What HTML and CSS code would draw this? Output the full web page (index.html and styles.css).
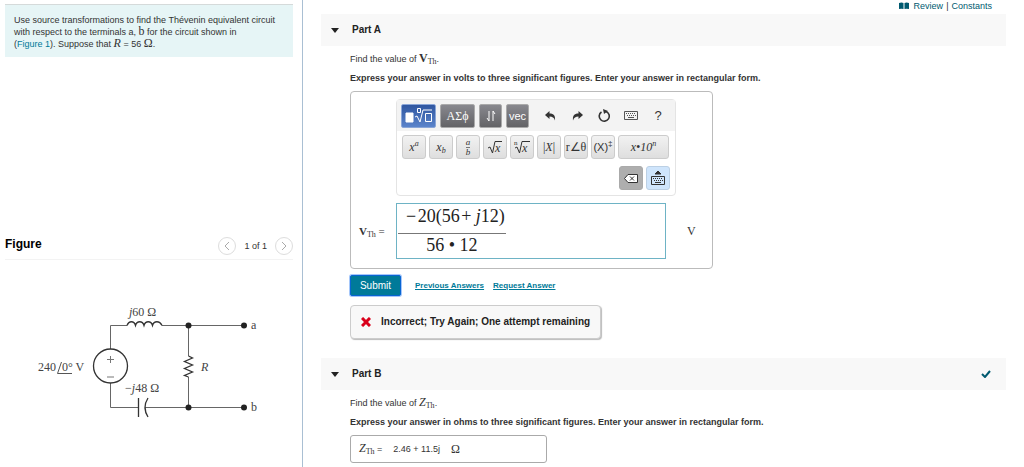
FILE: index.html
```html
<!DOCTYPE html>
<html lang="en">
<head>
    <meta charset="UTF-8">
    <meta name="viewport" content="width=device-width, initial-scale=1.0">
    <title>Thévenin Equivalent</title>
    <link rel="stylesheet" href="styles.css">
</head>
<body>
    <div class="page">
        <aside class="sidebar">
            <div class="problem">
                Use source transformations to find the Thévenin equivalent circuit<br>
                with respect to the terminals a, <span class="math">b</span> for the circuit shown in<br>
                (<a href="#figure">Figure 1</a>). Suppose that <i class="math">R</i> = 56 <span class="math">Ω</span>.
            </div>

            <section class="figure" id="figure">
                <div class="figure-head">
                    <h2>Figure</h2>
                    <div class="pager">
                        <button class="pager-btn" aria-label="Previous figure">
                            <svg width="6" height="10" viewBox="0 0 6 10"><path d="M5 1L1 5l4 4"/></svg>
                        </button>
                        <span>1 of 1</span>
                        <button class="pager-btn" aria-label="Next figure">
                            <svg width="6" height="10" viewBox="0 0 6 10"><path d="M1 1l4 4-4 4"/></svg>
                        </button>
                    </div>
                </div>
                <svg class="circuit" width="260" height="135" viewBox="0 0 260 135" role="img" aria-label="Circuit diagram">
                    <!-- wires -->
                    <g class="wire">
                        <path d="M90.500 55V31.500H107M142 31.500H224"/>
                        <path d="M90.500 89V113.500H118M125 113.500H224"/>
                        <path d="M168.500 31V62M168.500 83V113"/>
                    </g>
                    <!-- source, inductor, capacitor, resistor -->
                    <g class="part-line">
                        <circle cx="90.500" cy="72" r="17"/>
                        <path d="M107 31.500c2-5 7-5 8.500 0c1.500-5 7-5 8.500 0c1.500-5 7-5 8.500 0c1.500-5 7-5 9.500 0"/>
                        <path d="M118.500 104v19M128 104q-6 9.500 0 19"/>
                        <path d="M168.500 62l4 2-8 3.500 8 3.500-8 3.500 8 3.500-8 3.500 4 1.500"/>
                    </g>
                    <path class="sign" d="M87 65.500h7M90.500 62v7M87 83h7"/>
                    <g class="dot">
                        <circle cx="168.500" cy="31.500" r="3"/>
                        <circle cx="224" cy="31.500" r="3"/>
                        <circle cx="168.500" cy="113.500" r="3"/>
                        <circle cx="224" cy="113.500" r="3"/>
                    </g>
                    <g class="label">
                        <text x="109" y="22"><tspan class="it">j</tspan>60 Ω</text>
                        <text x="105" y="98">−<tspan class="it">j</tspan>48 Ω</text>
                        <text x="18" y="77">240</text>
                        <text x="42" y="77">0° V</text>
                        <text class="it" x="181" y="77">R</text>
                        <text x="231" y="35">a</text>
                        <text x="231" y="117">b</text>
                        <path d="M41.500 68L37.500 79.500H52"/>
                    </g>
                </svg>
            </section>
        </aside>

        <main class="content">
            <nav class="links">
                <svg width="10" height="8" viewBox="0 0 10 8"><path d="M0 1q2.500-1 4.500 0v6q-2-.6-4.500 0zM5.500 1q2-1 4.500 0v6q-2.500-.6-4.500 0z"/></svg>
                <a href="#review">Review</a> <span>|</span> <a href="#constants">Constants</a>
            </nav>

            <section class="part">
                <button class="part-head" aria-expanded="true">
                    <span class="caret"></span>
                    <span>Part A</span>
                </button>
                <div class="part-body">
                    <p>Find the value of <b class="math">V</b><sub>Th</sub>.</p>
                    <p class="instruction">Express your answer in volts to three significant figures. Enter your answer in rectangular form.</p>

                    <div class="answer">
                        <div class="toolbar" role="toolbar" aria-label="Equation editor">
                            <div class="tabs">
                                <button class="tab wide active" aria-label="Templates">
                                    <svg width="28" height="18" viewBox="0 0 28 18"><path class="fill" d="M1 6h7v9H1z"/><path d="M12.500 1.500h3v4h-3zM10 10l2-1 3 6 3-12h9M20.500 6.500h6v8h-6z"/></svg>
                                </button>
                                <button class="tab wide greek">ΑΣϕ</button>
                                <button class="tab" aria-label="Arrows">
                                    <svg width="10" height="12" viewBox="0 0 10 12"><path d="M3 1v10M1 8l2 3M7 11V1M7 1l2 3"/></svg>
                                </button>
                                <button class="tab">vec</button>
                                <div class="tools">
                                    <button class="tool" aria-label="Undo">
                                        <svg width="11" height="10" viewBox="0 0 11 10"><path class="solid" d="M0 4l4.500-4v2.500C9 2.500 10.500 5 10 9.500 9 6.500 7.500 5.500 4.500 5.500V8z"/></svg>
                                    </button>
                                    <button class="tool" aria-label="Redo">
                                        <svg width="11" height="10" viewBox="0 0 11 10"><path class="solid" d="M11 4L6.500 0v2.500C2 2.500.5 5 1 9.500 2 6.500 3.500 5.500 6.500 5.500V8z"/></svg>
                                    </button>
                                    <button class="tool" aria-label="Reset">
                                        <svg width="12" height="13" viewBox="0 0 12 13"><path class="ring" d="M3.500 3A5 5 0 1 0 8 2.500"/><path class="solid" d="M5 0l5 2-4 3z"/></svg>
                                    </button>
                                    <button class="tool" aria-label="Keyboard shortcuts">
                                        <svg width="14" height="9" viewBox="0 0 14 9"><path class="keys" d="M.5.5h13v8H.500z"/><path class="keys dots" d="M2 2.500h10M3 4.500h9"/><path class="keys" d="M4 6.500h6"/></svg>
                                    </button>
                                    <button class="tool help" aria-label="Help">?</button>
                                </div>
                            </div>
                            <div class="keypad">
                                <button class="key"><i>x<sup>a</sup></i></button>
                                <button class="key"><i>x<sub>b</sub></i></button>
                                <button class="key"><i class="small-frac"><span>a</span><span>b</span></i></button>
                                <button class="key" aria-label="Square root">
                                    <svg width="16" height="14" viewBox="0 0 16 14"><path d="M1 8l2-1 2.500 6L8 1.500h7"/><text x="8" y="12">x</text></svg>
                                </button>
                                <button class="key" aria-label="Nth root">
                                    <svg width="18" height="16" viewBox="0 0 18 16"><path d="M2 9l2-1 2.500 6L9 2.500h8"/><text class="index" x="1" y="6">n</text><text x="9" y="13">x</text></svg>
                                </button>
                                <button class="key"><span>|<i>X</i>|</span></button>
                                <button class="key">r∠θ</button>
                                <button class="key sans">(X)<sup>‡</sup></button>
                                <button class="key sci"><i>x•10<sup>n</sup></i></button>
                            </div>
                            <div class="keypad end">
                                <button class="key delete" aria-label="Delete">
                                    <svg width="14" height="9" viewBox="0 0 14 9"><path class="tag" d="M4 .5h9.500v8H4L.500 4.500z"/><path d="M6 2.500l4 4M10 2.500l-4 4"/></svg>
                                </button>
                                <button class="key board" aria-label="Toggle keyboard">
                                    <svg width="14" height="14" viewBox="0 0 14 14"><path class="solid" d="M7 0l3 3H4z"/><path class="keys" d="M.5 5.500h13v8H.500z"/><path class="keys dots" d="M2 7.500h10M3 9.500h9"/><path class="keys" d="M4 11.500h6"/></svg>
                                </button>
                            </div>
                        </div>
                        <div class="entry">
                            <span class="entry-name" id="vth"><b>V</b><sub>Th</sub> =</span>
                            <div class="entry-field" role="textbox" contenteditable="true" aria-labelledby="vth">
                                <div class="fraction">
                                    <div class="numerator">−&#8202;20(56&#8202;+ <i>j</i>12)</div>
                                    <div class="denominator">56 • 12</div>
                                </div>
                            </div>
                            <span class="unit">V</span>
                        </div>
                    </div>

                    <div class="actions">
                        <button class="submit">Submit</button>
                        <a href="#previous">Previous Answers</a>
                        <a href="#request">Request Answer</a>
                    </div>

                    <div class="feedback" role="status">
                        <svg width="10" height="10" viewBox="0 0 10 10"><path d="M1 1l8 8M9 1L1 9"/></svg>
                        <span>Incorrect; Try Again; One attempt remaining</span>
                    </div>
                </div>
            </section>

            <section class="part">
                <button class="part-head" aria-expanded="true">
                    <span class="caret"></span>
                    <span>Part B</span>
                    <svg class="done" width="10" height="8" viewBox="0 0 10 8"><path d="M1 4l3 3 5-6"/></svg>
                </button>
                <div class="part-body">
                    <p>Find the value of <i class="math">Z</i><sub>Th</sub>.</p>
                    <p class="instruction">Express your answer in ohms to three significant figures. Enter your answer in rectangular form.</p>
                    <div class="result">
                        <span><i class="math">Z</i><sub>Th</sub> =</span>
                        <span>2.46 + 11.5j</span>
                        <span class="math">Ω</span>
                    </div>
                </div>
            </section>
        </main>
    </div>
</body>
</html>
```
FILE: styles.css
```css
* {
    box-sizing: border-box;
}
body {
    margin: 0;
    background: #fff;
    color: #333;
    font-family: "Liberation Sans", Arial, sans-serif;
    font-size: 9px;
    line-height: 12px;
}
a {
    color: #007a99;
    text-decoration: none;
}
button {
    padding: 0;
    border: none;
    font: inherit;
    color: inherit;
    cursor: pointer;
}
svg {
    display: block;
    fill: none;
}
p {
    margin: 0;
}
.page {
    display: grid;
    grid-template-columns: 303px minmax(0, 1fr);
    min-height: 100vh;
}
.math {
    font-family: "Liberation Serif", "Times New Roman", serif;
    font-size: 12px;
    line-height: 10px;
}
sub {
    font-family: "Liberation Serif", "Times New Roman", serif;
    font-size: 8px;
    line-height: 0;
    vertical-align: -2px;
}

/* left column */
.sidebar {
    padding: 4px 9px 0 5px;
    border-right: 1px solid #a9bfd3;
}
.problem {
    padding: 9px 8px 7px 9px;
    border-top: 1px solid #d5dada;
    background: #e6f5f6;
}
.figure {
    margin-top: 179px;
}
.figure-head {
    display: flex;
    justify-content: space-between;
    padding-bottom: 4px;
    border-bottom: 1px solid #f3f3f3;
}
.figure-head h2 {
    margin: 0;
    color: #000;
    font-size: 12px;
    line-height: 16px;
}
.pager {
    display: flex;
    align-items: center;
    gap: 8px;
    padding-top: 1px;
}
.pager-btn {
    display: grid;
    place-items: center;
    width: 18px;
    height: 18px;
    border: 1px solid #ddd;
    border-radius: 50%;
    background: #fff;
}
.pager-btn path {
    stroke: #aaa;
}
.circuit {
    margin: 34px 0 0 15px;
}
.wire {
    stroke: #666;
}
.part-line {
    stroke: #333;
    stroke-width: 1.3;
}
.sign {
    stroke: #777;
}
.dot {
    fill: #222;
}
.label {
    fill: #444;
    font-family: "Liberation Serif", "Times New Roman", serif;
    font-size: 12px;
}
.label path {
    fill: none;
    stroke: #555;
}
.it {
    font-style: italic;
}

/* right column */
.content {
    padding: 0 18px 4px;
}
.links {
    display: flex;
    justify-content: flex-end;
    align-items: center;
    gap: 3px;
    height: 14px;
    padding: 0 14px 3px 0;
}
.links a {
    color: #005a70;
}
.links svg {
    margin-right: 2px;
    fill: #005a70;
}
.part {
    margin-bottom: 19px;
}
.part-head {
    display: flex;
    align-items: center;
    gap: 13px;
    width: 100%;
    height: 32px;
    padding: 0 15px 0 10px;
    background: #f8f8f8;
    color: #222;
    font-size: 10px;
    font-weight: bold;
}
.caret {
    border: 4px solid transparent;
    border-top: 5px solid #222;
    border-bottom: 0;
}
.done {
    margin-left: auto;
    stroke: #005a70;
    stroke-width: 2;
}
.part-body {
    padding: 7px 0 0 29px;
}
.part-body p {
    margin-bottom: 7px;
}
.part-body .instruction {
    font-weight: bold;
}
.answer {
    width: 363px;
    max-width: 100%;
    padding: 7px 8px 9px;
    border: 1px solid #bbb;
    border-radius: 4px;
}
.toolbar {
    width: 280px;
    margin-left: 37px;
    border: 1px solid #e4e4e4;
    border-radius: 4px;
}
.tabs {
    display: flex;
    align-items: center;
    gap: 4px;
    height: 31px;
    padding-left: 4px;
    background: #f3f3f3;
}
.tab {
    display: grid;
    place-items: center;
    width: 23px;
    height: 24px;
    border: 1px solid #aaa;
    border-radius: 2px;
    background: linear-gradient(#88888e, #636366);
    color: #fff;
    font-size: 11px;
}
.tab.wide {
    width: 35px;
}
.tab.active {
    border-color: #8aa6d8;
    background: linear-gradient(#2f56a0, #5b84cb);
}
.tab path {
    stroke: #fff;
}
.tab .fill {
    fill: #fff;
}
.greek {
    font-family: "Liberation Serif", "Times New Roman", serif;
    font-size: 12px;
}
.tools {
    display: flex;
    gap: 3px;
    margin-left: 5px;
}
.tool {
    display: grid;
    place-items: center;
    width: 24px;
    height: 24px;
    background: none;
}
.solid {
    fill: #333;
}
.ring {
    stroke: #333;
    stroke-width: 1.6;
}
.keys {
    stroke: #555;
}
.dots {
    stroke-dasharray: 1 1;
}
.help {
    font-size: 13px;
}
.keypad {
    display: flex;
    gap: 3px;
    padding: 4px 5px 3px;
}
.keypad.end {
    justify-content: flex-end;
    padding-bottom: 5px;
}
.key {
    display: grid;
    place-items: center;
    width: 24px;
    height: 24px;
    border: 1px solid #ccc;
    border-radius: 3px;
    background: linear-gradient(#f2f2f2, #dedede);
    font-family: "Liberation Serif", "Times New Roman", serif;
    font-size: 12px;
}
.key sup,
.key sub {
    font-size: 8px;
    line-height: 0;
}
.key path {
    stroke: #333;
}
.key text {
    fill: #333;
    font-size: 12px;
    font-style: italic;
}
.key .index {
    font-size: 7px;
    font-style: normal;
}
.small-frac {
    display: grid;
    font-size: 9px;
    line-height: 9px;
}
.small-frac span:first-child {
    border-bottom: 1px solid #777;
}
.key.sans {
    display: block;
    font-family: "Liberation Sans", Arial, sans-serif;
    font-size: 11px;
}
.key.sci {
    width: 51px;
}
.key.delete {
    border-color: #aaa;
    background: #aeaeae;
}
.key .tag {
    fill: #fff;
}
.key.board {
    border-color: #bcd0e4;
    background: #cfe5fc;
}
.key .keys {
    stroke: #333;
}
.entry {
    display: flex;
    align-items: center;
    margin-top: 7px;
    font-family: "Liberation Serif", "Times New Roman", serif;
    font-size: 12px;
}
.entry-name {
    width: 37px;
    font-size: 11px;
    white-space: nowrap;
}
.entry-field {
    width: 270px;
    padding: 1px;
    border: 1px solid #6eb3c5;
    color: #222;
    font-size: 18px;
}
.fraction {
    display: block;
    width: fit-content;
    text-align: center;
}
.numerator {
    padding: 0 1px 5px 8px;
    border-bottom: 1px solid #777;
    line-height: 23px;
}
.denominator {
    line-height: 23px;
}
.unit {
    margin-left: 21px;
}
.actions {
    display: flex;
    align-items: center;
    gap: 9px;
    margin-top: 6px;
}
.actions a {
    font-size: 8px;
    font-weight: bold;
    text-decoration: underline;
}
.submit {
    width: 51px;
    height: 21px;
    margin-right: 5px;
    border: 1px solid #0865d2;
    border-radius: 2px;
    background: #007a99;
    box-shadow: 0 0 0 1px #a5c7fa;
    color: #fff;
    font-size: 10px;
}
.feedback {
    display: flex;
    align-items: center;
    gap: 10px;
    width: fit-content;
    height: 34px;
    margin-top: 9px;
    padding: 0 10px;
    border: 1px solid #ccc;
    border-radius: 4px;
    background: #f8f8f8;
    box-shadow: 1px 1px 1px #bbb;
    color: #222;
    font-size: 10px;
    font-weight: bold;
}
.feedback svg {
    stroke: #d9001b;
    stroke-width: 3;
}
.result {
    display: flex;
    align-items: center;
    gap: 11px;
    width: 197px;
    height: 28px;
    padding: 0 8px;
    border: 1px solid #aaa;
    border-radius: 3px;
}
```
